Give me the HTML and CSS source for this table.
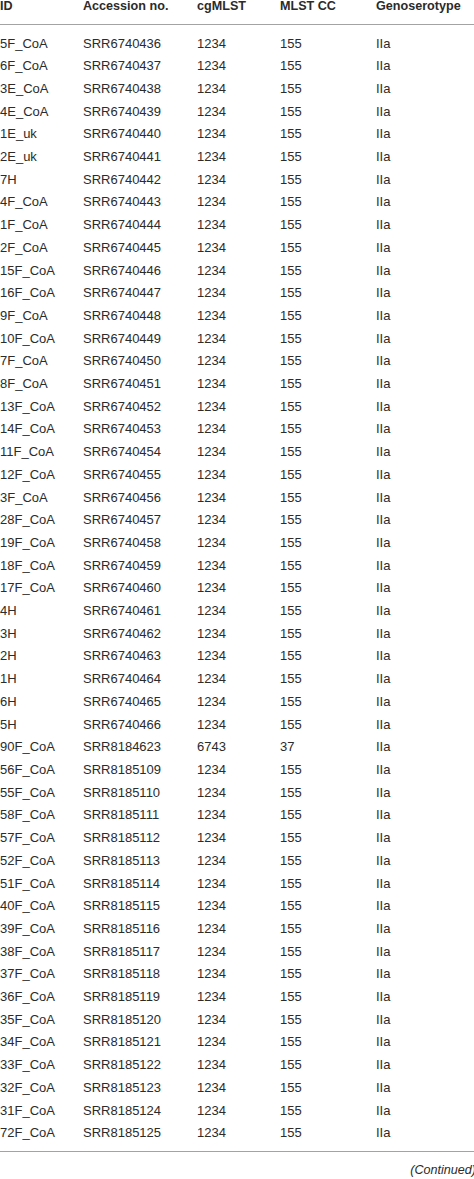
FILE: index.html
```html
<!DOCTYPE html>
<html>
<head>
<meta charset="utf-8">
<link rel="stylesheet" href="styles.css">
</head>
<body>
<div class="page">
<table class="tbl">
<thead>
<tr><th>ID</th><th>Accession no.</th><th>cgMLST</th><th>MLST CC</th><th>Genoserotype</th></tr>
</thead>
<tbody>
<tr><td>5F_CoA</td><td>SRR6740436</td><td>1234</td><td>155</td><td>IIa</td></tr>
<tr><td>6F_CoA</td><td>SRR6740437</td><td>1234</td><td>155</td><td>IIa</td></tr>
<tr><td>3E_CoA</td><td>SRR6740438</td><td>1234</td><td>155</td><td>IIa</td></tr>
<tr><td>4E_CoA</td><td>SRR6740439</td><td>1234</td><td>155</td><td>IIa</td></tr>
<tr><td>1E_uk</td><td>SRR6740440</td><td>1234</td><td>155</td><td>IIa</td></tr>
<tr><td>2E_uk</td><td>SRR6740441</td><td>1234</td><td>155</td><td>IIa</td></tr>
<tr><td>7H</td><td>SRR6740442</td><td>1234</td><td>155</td><td>IIa</td></tr>
<tr><td>4F_CoA</td><td>SRR6740443</td><td>1234</td><td>155</td><td>IIa</td></tr>
<tr><td>1F_CoA</td><td>SRR6740444</td><td>1234</td><td>155</td><td>IIa</td></tr>
<tr><td>2F_CoA</td><td>SRR6740445</td><td>1234</td><td>155</td><td>IIa</td></tr>
<tr><td>15F_CoA</td><td>SRR6740446</td><td>1234</td><td>155</td><td>IIa</td></tr>
<tr><td>16F_CoA</td><td>SRR6740447</td><td>1234</td><td>155</td><td>IIa</td></tr>
<tr><td>9F_CoA</td><td>SRR6740448</td><td>1234</td><td>155</td><td>IIa</td></tr>
<tr><td>10F_CoA</td><td>SRR6740449</td><td>1234</td><td>155</td><td>IIa</td></tr>
<tr><td>7F_CoA</td><td>SRR6740450</td><td>1234</td><td>155</td><td>IIa</td></tr>
<tr><td>8F_CoA</td><td>SRR6740451</td><td>1234</td><td>155</td><td>IIa</td></tr>
<tr><td>13F_CoA</td><td>SRR6740452</td><td>1234</td><td>155</td><td>IIa</td></tr>
<tr><td>14F_CoA</td><td>SRR6740453</td><td>1234</td><td>155</td><td>IIa</td></tr>
<tr><td>11F_CoA</td><td>SRR6740454</td><td>1234</td><td>155</td><td>IIa</td></tr>
<tr><td>12F_CoA</td><td>SRR6740455</td><td>1234</td><td>155</td><td>IIa</td></tr>
<tr><td>3F_CoA</td><td>SRR6740456</td><td>1234</td><td>155</td><td>IIa</td></tr>
<tr><td>28F_CoA</td><td>SRR6740457</td><td>1234</td><td>155</td><td>IIa</td></tr>
<tr><td>19F_CoA</td><td>SRR6740458</td><td>1234</td><td>155</td><td>IIa</td></tr>
<tr><td>18F_CoA</td><td>SRR6740459</td><td>1234</td><td>155</td><td>IIa</td></tr>
<tr><td>17F_CoA</td><td>SRR6740460</td><td>1234</td><td>155</td><td>IIa</td></tr>
<tr><td>4H</td><td>SRR6740461</td><td>1234</td><td>155</td><td>IIa</td></tr>
<tr><td>3H</td><td>SRR6740462</td><td>1234</td><td>155</td><td>IIa</td></tr>
<tr><td>2H</td><td>SRR6740463</td><td>1234</td><td>155</td><td>IIa</td></tr>
<tr><td>1H</td><td>SRR6740464</td><td>1234</td><td>155</td><td>IIa</td></tr>
<tr><td>6H</td><td>SRR6740465</td><td>1234</td><td>155</td><td>IIa</td></tr>
<tr><td>5H</td><td>SRR6740466</td><td>1234</td><td>155</td><td>IIa</td></tr>
<tr><td>90F_CoA</td><td>SRR8184623</td><td>6743</td><td>37</td><td>IIa</td></tr>
<tr><td>56F_CoA</td><td>SRR8185109</td><td>1234</td><td>155</td><td>IIa</td></tr>
<tr><td>55F_CoA</td><td>SRR8185110</td><td>1234</td><td>155</td><td>IIa</td></tr>
<tr><td>58F_CoA</td><td>SRR8185111</td><td>1234</td><td>155</td><td>IIa</td></tr>
<tr><td>57F_CoA</td><td>SRR8185112</td><td>1234</td><td>155</td><td>IIa</td></tr>
<tr><td>52F_CoA</td><td>SRR8185113</td><td>1234</td><td>155</td><td>IIa</td></tr>
<tr><td>51F_CoA</td><td>SRR8185114</td><td>1234</td><td>155</td><td>IIa</td></tr>
<tr><td>40F_CoA</td><td>SRR8185115</td><td>1234</td><td>155</td><td>IIa</td></tr>
<tr><td>39F_CoA</td><td>SRR8185116</td><td>1234</td><td>155</td><td>IIa</td></tr>
<tr><td>38F_CoA</td><td>SRR8185117</td><td>1234</td><td>155</td><td>IIa</td></tr>
<tr><td>37F_CoA</td><td>SRR8185118</td><td>1234</td><td>155</td><td>IIa</td></tr>
<tr><td>36F_CoA</td><td>SRR8185119</td><td>1234</td><td>155</td><td>IIa</td></tr>
<tr><td>35F_CoA</td><td>SRR8185120</td><td>1234</td><td>155</td><td>IIa</td></tr>
<tr><td>34F_CoA</td><td>SRR8185121</td><td>1234</td><td>155</td><td>IIa</td></tr>
<tr><td>33F_CoA</td><td>SRR8185122</td><td>1234</td><td>155</td><td>IIa</td></tr>
<tr><td>32F_CoA</td><td>SRR8185123</td><td>1234</td><td>155</td><td>IIa</td></tr>
<tr><td>31F_CoA</td><td>SRR8185124</td><td>1234</td><td>155</td><td>IIa</td></tr>
<tr><td>72F_CoA</td><td>SRR8185125</td><td>1234</td><td>155</td><td>IIa</td></tr>
</tbody>
</table>
<div class="cont">(Continued)</div>
</div>
</body>
</html>
```

FILE: styles.css
```css
html, body {
  margin: 0;
  padding: 0;
  background: #ffffff;
}
.page {
  width: 474px;
  overflow: hidden;
  font-family: "Liberation Sans", Arial, Helvetica, sans-serif;
  color: #2b2b2b;
}
.tbl {
  border-collapse: collapse;
  width: 476px;
  margin-top: -2px;
  margin-left: -1px;
  table-layout: fixed;
}
.tbl th, .tbl td {
  padding: 0;
  text-align: left;
  vertical-align: middle;
  white-space: nowrap;
}
.tbl th {
  font-size: 12.6px;
  font-weight: bold;
  line-height: 16px;
  padding-bottom: 10px;
  border-bottom: 1.5px solid #a3a3a3;
}
.tbl td {
  font-size: 13px;
  line-height: 22.7px;
}
.tbl th:nth-child(1), .tbl td:nth-child(1) { width: 83px; padding-left: 1px; }
.tbl th:nth-child(2), .tbl td:nth-child(2) { width: 114px; }
.tbl th:nth-child(3), .tbl td:nth-child(3) { width: 83px; }
.tbl th:nth-child(4), .tbl td:nth-child(4) { width: 96px; }
.tbl tbody tr:first-child td { padding-top: 7.5px; }
.tbl tbody tr:last-child td {
  padding-bottom: 6.5px;
  border-bottom: 1.5px solid #a3a3a3;
}
.cont {
  text-align: right;
  font-style: italic;
  font-size: 12.6px;
  line-height: 16px;
  margin-top: 10px;
  margin-right: -2px;
}
```
